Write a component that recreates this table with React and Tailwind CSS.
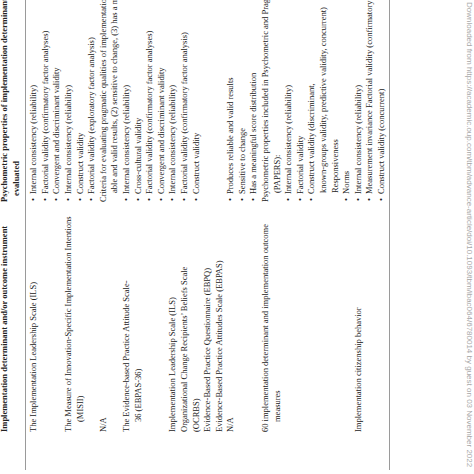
const rows = [
  {
    left: [["The Implementation Leadership Scale (ILS)"]],
    right: [
      ["b", "Internal consistency (reliability)"],
      ["b", "Factorial validity (confirmatory factor analyses)"],
      ["b", "Convergent and discriminant validity"],
    ],
  },
  {
    left: [["The Measure of Innovation-Specific Implementation Intentions"], ["(MISII)", true]],
    right: [
      ["b", "Internal consistency (reliability)"],
      ["b", "Construct validity"],
      ["b", "Factorial validity (exploratory factor analysis)"],
    ],
  },
  {
    left: [["N/A"]],
    right: [
      ["p", "Criteria for evaluating pragmatic qualities of implementation measures: (1) produces reli-"],
      ["i", "able and valid results, (2) sensitive to change, (3) has a meaningful score distribution"],
    ],
  },
  {
    left: [["The Evidence-based Practice Attitude Scale-"], ["36 (EBPAS-36)", true]],
    right: [
      ["b", "Internal consistency (reliability)"],
      ["b", "Cross-cultural validity"],
      ["b", "Factorial validity (confirmatory factor analyses)"],
      ["b", "Convergent and discriminant validity"],
    ],
  },
  {
    left: [
      ["Implementation Leadership Scale (ILS)"],
      ["Organizational Change Recipients’ Beliefs Scale"],
      ["(OCRBS)"],
      ["Evidence-Based Practice Questionnaire (EBPQ)"],
      ["Evidence-Based Practice Attitudes Scale (EBPAS)"],
    ],
    right: [
      ["b", "Internal consistency (reliability)"],
      ["b", "Factorial validity (confirmatory factor analysis)"],
      ["b", "Construct validity"],
    ],
  },
  {
    left: [["N/A"]],
    right: [
      ["b", "Produces reliable and valid results"],
      ["b", "Sensitive to change"],
      ["b", "Has a meaningful score distribution"],
    ],
  },
  {
    left: [["60 implementation determinant and implementation outcome"], ["measures", true]],
    right: [
      ["p", "Psychometric properties included in Psychometric and Pragmatic Evidence Rating Scale"],
      ["i", "(PAPERS):"],
      ["b", "Internal consistency (reliability)"],
      ["b", "Factorial validity"],
      ["b", "Construct validity (discriminant,"],
      ["i", "known-groups validity, predictive validity, concurrent)"],
      ["i", "Responsiveness"],
      ["b", "Norms"],
    ],
  },
  {
    left: [["Implementation citizenship behavior"]],
    right: [
      ["b", "Internal consistency (reliability)"],
      ["b", "Measurement invariance Factorial validity (confirmatory factor analysis)"],
      ["b", "Construct validity (concurrent)"],
    ],
  },
];

function Item({ kind, text }) {
  if (kind === "b") {
    return (
      <div className="flex whitespace-nowrap">
        <span className="w-[8px] shrink-0 pl-[1px]">•</span>
        <span>{text}</span>
      </div>
    );
  }
  return <div className={`whitespace-nowrap ${kind === "i" ? "pl-[9px]" : ""}`}>{text}</div>;
}

export default function App() {
  return (
    <div className="relative w-[474px] h-[474px] overflow-hidden bg-white">
      {/* the table page is turned on its side */}
      <div className="w-[474px] h-[474px] -rotate-90 overflow-hidden">
        <div className="ml-[4px] -mt-[1px] w-[640px] font-['Liberation_Serif','Times_New_Roman',serif] text-[8.5px] leading-[11.6px] text-[#222]">
          <div className="grid grid-cols-[268px_1fr] border-b border-[#9a9a9a] pb-[3px] font-bold">
            <div className="pl-[38px] whitespace-nowrap">Implementation determinant and/or outcome instrument</div>
            <div>
              <div className="whitespace-nowrap">Psychometric properties of implementation determinant and/or outcome instruments</div>
              <div className="pl-[6px]">evaluated</div>
            </div>
          </div>
          <div className="grid grid-cols-[268px_1fr] pt-[2px] pb-[1px] border-b border-[#9a9a9a]">
            {rows.map((row, i) => (
              <div key={i} className="contents">
                <div className="pl-[38px]">
                  {row.left.map(([t, hang], j) => (
                    <div key={j} className={`whitespace-nowrap ${hang ? "pl-[10px]" : ""}`}>{t}</div>
                  ))}
                </div>
                <div>
                  {row.right.map(([k, t], j) => (
                    <Item key={j} kind={k} text={t} />
                  ))}
                </div>
              </div>
            ))}
          </div>
        </div>
      </div>

      {/* download stamp along the right edge */}
      <div className="absolute right-0 bottom-[7px] [writing-mode:vertical-rl] whitespace-nowrap font-['Liberation_Sans',Arial,sans-serif] text-[8px] leading-[9px] text-[#a8a8a8]">
        Downloaded from https://academic.oup.com/tbm/advance-article/doi/10.1093/tbm/ibac064/6780014 by guest on 03 November 2022
      </div>
    </div>
  );
}
